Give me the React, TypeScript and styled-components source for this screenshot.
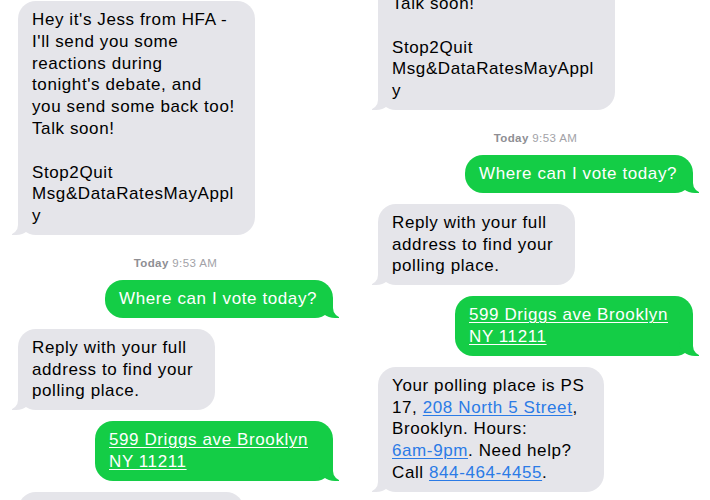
import React from "react";
import styled, { createGlobalStyle } from "styled-components";

const GlobalStyle = createGlobalStyle`
  html, body {
    margin: 0;
    padding: 0;
    background: #ffffff;
  }
  body {
    font-family: "Liberation Sans", Arial, Helvetica, sans-serif;
    -webkit-font-smoothing: antialiased;
  }
`;

const GRAY = "#e5e5ea";
const GREEN = "#14cd46";

const Page = styled.div`
  display: flex;
  gap: 10px;
  width: 710px;
  height: 500px;
  overflow: hidden;
  background: #fff;
`;

const Screen = styled.div`
  width: 350px;
  height: 500px;
  overflow: hidden;
  flex-shrink: 0;
`;

const Thread = styled.div<{ $scroll: number }>`
  display: flex;
  flex-direction: column;
  padding: 1px 17px 0 18px;
  margin-top: ${(p) => -p.$scroll}px;
`;

const Bubble = styled.div<{ $me?: boolean; $w: number }>`
  position: relative;
  z-index: 0;
  box-sizing: border-box;
  width: ${(p) => p.$w}px;
  align-self: ${(p) => (p.$me ? "flex-end" : "flex-start")};
  padding: 8px 0 8px 14px;
  border-radius: 18px;
  background: ${(p) => (p.$me ? GREEN : GRAY)};
  color: ${(p) => (p.$me ? "#fff" : "#000")};
  font-size: 17px;
  line-height: 21.8px;
  letter-spacing: 0.6px;
  white-space: nowrap;

  & + & {
    margin-top: 11px;
  }

  &::before {
    content: "";
    position: absolute;
    z-index: -1;
    bottom: 0;
    ${(p) => (p.$me ? "right: -6px;" : "left: -6px;")}
    width: 20px;
    height: 18px;
    background: ${(p) => (p.$me ? GREEN : GRAY)};
    ${(p) =>
      p.$me
        ? "border-bottom-left-radius: 16px 14px;"
        : "border-bottom-right-radius: 16px 14px;"}
  }

  &::after {
    content: "";
    position: absolute;
    z-index: 1;
    bottom: 0;
    ${(p) => (p.$me ? "right: -20px;" : "left: -20px;")}
    width: 20px;
    height: 18px;
    background: #fff;
    ${(p) =>
      p.$me
        ? "border-bottom-left-radius: 10px;"
        : "border-bottom-right-radius: 10px;"}
  }
`;

const Link = styled.span<{ $light?: boolean }>`
  color: ${(p) => (p.$light ? "#fff" : "#2b7be6")};
  text-decoration: underline;
  text-decoration-thickness: 1px;
  text-underline-offset: 2px;
`;

const Stamp = styled.div`
  margin: 21px 0 10px;
  text-align: center;
  font-size: 11.5px;
  line-height: 14px;
  letter-spacing: 0.4px;
  color: #a2a2a7;

  b {
    color: #8e8e93;
    font-weight: 700;
  }
`;

function Conversation({ scroll }: { scroll: number }) {
  return (
    <Thread $scroll={scroll}>
      <Bubble $w={237}>
        Hey it's Jess from HFA -<br />
        I'll send you some<br />
        reactions during<br />
        tonight's debate, and<br />
        you send some back too!<br />
        Talk soon!<br />
        <br />
        Stop2Quit<br />
        Msg&amp;DataRatesMayAppl<br />y
      </Bubble>
      <Stamp>
        <b>Today</b> 9:53 AM
      </Stamp>
      <Bubble $me $w={228}>
        Where can I vote today?
      </Bubble>
      <Bubble $w={197}>
        Reply with your full<br />
        address to find your<br />
        polling place.
      </Bubble>
      <Bubble $me $w={238}>
        <Link $light>599 Driggs ave Brooklyn</Link>
        <br />
        <Link $light>NY 11211</Link>
      </Bubble>
      <Bubble $w={226}>
        Your polling place is PS<br />
        17, <Link>208 North 5 Street</Link>,<br />
        Brooklyn. Hours:<br />
        <Link>6am-9pm</Link>. Need help?<br />
        Call <Link>844-464-4455</Link>.
      </Bubble>
    </Thread>
  );
}

export default function App() {
  return (
    <>
      <GlobalStyle />
      <Page>
        <Screen>
          <Conversation scroll={0} />
        </Screen>
        <Screen>
          <Conversation scroll={125} />
        </Screen>
      </Page>
    </>
  );
}
